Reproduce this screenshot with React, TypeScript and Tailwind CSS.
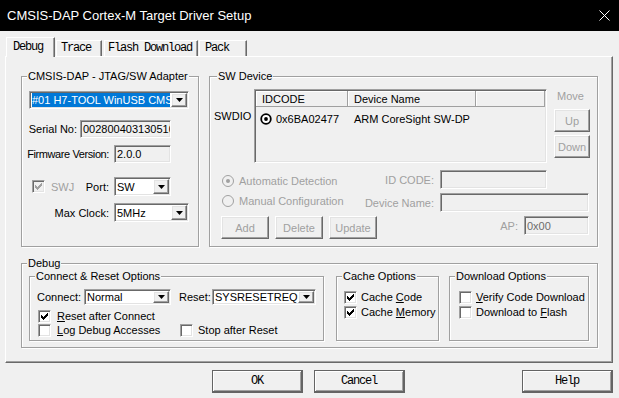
import React from "react";

const sunken =
  "border border-t-[#a0a0a0] border-l-[#a0a0a0] border-r-white border-b-white shadow-[inset_1px_1px_0_#696969,inset_-1px_-1px_0_#e3e3e3]";
const raised =
  "border border-t-white border-l-white border-r-[#696969] border-b-[#696969] shadow-[inset_-1px_-1px_0_#a0a0a0,inset_1px_1px_0_#e3e3e3]";

function Arrow() {
  return (
    <div className={`w-[16px] shrink-0 flex items-center justify-center bg-[#f0f0f0] ${raised}`}>
      <svg width="7" height="4" viewBox="0 0 7 4">
        <path d="M0 0H7L3.5 4Z" fill="#000" />
      </svg>
    </div>
  );
}

function Combo({ className, text, highlight }: { className: string; text: string; highlight?: boolean }) {
  return (
    <div className={`flex shrink-0 p-[1px] bg-white ${sunken} ${className}`}>
      <div className="flex-1 min-w-0 flex items-center overflow-hidden whitespace-nowrap pl-[1px] pr-[1px]">
        {highlight ? (
          <div className="flex-1 min-w-0 h-full flex items-center overflow-hidden bg-[#0078d7] text-white">{text}</div>
        ) : (
          <span>{text}</span>
        )}
      </div>
      <Arrow />
    </div>
  );
}

function Field({ className, children }: { className: string; children?: React.ReactNode }) {
  return (
    <div className={`flex shrink-0 items-center overflow-hidden whitespace-nowrap p-[1px] pl-[2px] bg-[#f0f0f0] ${sunken} ${className}`}>
      {children}
    </div>
  );
}

function Label({ className, children }: { className: string; children: React.ReactNode }) {
  return <div className={`shrink-0 flex justify-end whitespace-nowrap ${className}`}>{children}</div>;
}

function Check({ checked, disabled }: { checked?: boolean; disabled?: boolean }) {
  const c = disabled ? "#a0a0a0" : "#000";
  const cols = [2, 3, 4, 3, 2, 1, 0];
  return (
    <div className={`w-[13px] h-[13px] shrink-0 flex items-center justify-center ${sunken} ${disabled ? "bg-[#f0f0f0]" : "bg-white"}`}>
      {checked && (
        <svg width="7" height="7" viewBox="0 0 7 7" shapeRendering="crispEdges">
          {cols.map((y, x) => (
            <rect key={x} x={x} y={y} width="1" height="3" fill={c} />
          ))}
        </svg>
      )}
    </div>
  );
}

function Radio({ checked }: { checked?: boolean }) {
  return (
    <svg width="12" height="12" viewBox="0 0 12 12" className="shrink-0">
      <circle cx="6" cy="6" r="5.5" fill="#f0f0f0" stroke="#a0a0a0" />
      {checked && <circle cx="6" cy="6" r="2" fill="#a0a0a0" />}
    </svg>
  );
}

function Btn({ className, children, disabled }: { className: string; children: React.ReactNode; disabled?: boolean }) {
  return (
    <div className={`flex shrink-0 items-center justify-center bg-[#f0f0f0] ${raised} ${disabled ? "text-[#a0a0a0]" : ""} ${className}`}>
      {children}
    </div>
  );
}

function Group({ label, className, children, labelLeft }: { label: string; className: string; children?: React.ReactNode; labelLeft?: string }) {
  return (
    <div className={`relative shrink-0 border border-[#a0a0a0] shadow-[inset_1px_1px_0_#fff,1px_1px_0_#fff] ${className}`}>
      <span className={`absolute top-[-8px] px-[1px] bg-[#f0f0f0] leading-[14px] whitespace-nowrap ${labelLeft ?? "left-[5px]"}`}>{label}</span>
      {children}
    </div>
  );
}

const tabBase =
  "shrink-0 bg-[#f0f0f0] border-l border-t border-r border-white border-r-[#696969] shadow-[inset_-1px_0_0_#a0a0a0] leading-[14px] whitespace-nowrap";
const dlgBtn =
  "flex items-center justify-center w-[91px] h-[23px] bg-[#f0f0f0] border border-[#646464] border-r-2 border-b-2 shadow-[inset_1px_1px_0_#fff,inset_-1px_-1px_0_#a0a0a0]";

export default function App() {
  return (
    <div className="w-[619px] h-[398px] overflow-hidden bg-[#f0f0f0] flex flex-col text-[11px] leading-[14px] text-black font-['Liberation_Sans',Arial,sans-serif]">
      {/* Title bar */}
      <div className="h-[31px] shrink-0 bg-black text-white flex items-center pl-[7px] pr-[9px] text-[13px]">
        <span className="flex-1">CMSIS-DAP Cortex-M Target Driver Setup</span>
        <svg width="11" height="11" viewBox="0 0 11 11">
          <path d="M0.5 0.5L10.5 10.5M10.5 0.5L0.5 10.5" stroke="#fff" strokeWidth="1" />
        </svg>
      </div>

      {/* Tabs */}
      <div className="relative z-10 h-[25px] shrink-0 flex items-end pl-[6px] font-['Liberation_Mono',monospace] text-[12px] tracking-[-1.2px]">
        <div className={`${tabBase} w-[49px] h-[20px] -mb-px pl-[6px] pt-[2px]`}>Debug</div>
        <div className={`${tabBase} ml-[1px] w-[46px] h-[16px] pl-[4px]`}>Trace</div>
        <div className={`${tabBase} ml-[2px] w-[94px] h-[16px] pl-[3px]`}>Flash Download</div>
        <div className={`${tabBase} ml-[1px] w-[48px] h-[16px] pl-[5px]`}>Pack</div>
      </div>

      {/* Tab panel */}
      <div className="ml-[5px] w-[608px] h-[307px] shrink-0 border border-t-white border-l-white border-r-[#696969] border-b-[#696969] shadow-[inset_-1px_-1px_0_#a0a0a0] flex flex-col">
        <div className="flex mt-[19px] ml-[15px]">
          {/* Adapter group */}
          <Group label="CMSIS-DAP - JTAG/SW Adapter" className="w-[178px] h-[171px] flex flex-col">
            <Combo className="mt-[14px] ml-[7px] w-[160px] h-[18px]" text="#01 H7-TOOL WinUSB CMSIS-DAP" highlight />
            <div className="mt-[11px] h-[18px] flex items-center">
              <Label className="w-[55px]">Serial No:</Label>
              <Field className="ml-[3px] w-[91px] h-[18px]">002800403130510</Field>
            </div>
            <div className="mt-[7px] h-[18px] flex items-center">
              <Label className="w-[87px] tracking-[-0.4px]">Firmware Version:</Label>
              <Field className="ml-[5px] w-[57px] h-[18px]">2.0.0</Field>
            </div>
            <div className="mt-[14px] h-[19px] flex items-center">
              <div className="w-[87px] shrink-0 flex items-center">
                <div className="ml-[10px]">
                  <Check checked disabled />
                </div>
                <span className="ml-[6px] text-[#a0a0a0]">SWJ</span>
                <span className="ml-auto">Port:</span>
              </div>
              <Combo className="ml-[5px] w-[57px] h-[19px]" text="SW" />
            </div>
            <div className="mt-[7px] h-[19px] flex items-center">
              <Label className="w-[87px]">Max Clock:</Label>
              <Combo className="ml-[5px] w-[75px] h-[19px]" text="5MHz" />
            </div>
          </Group>

          {/* SW Device group */}
          <Group label="SW Device" labelLeft="left-[7px]" className="ml-[10px] w-[389px] h-[171px] flex flex-col">
            <div className="mt-[12px] flex">
              <div className="w-[44px] pl-[4px] pt-[20px] shrink-0">SWDIO</div>
              <div className={`w-[293px] h-[74px] shrink-0 p-[1px] flex flex-col bg-[#f0f0f0] ${sunken}`}>
                <div className="h-[16px] flex shrink-0">
                  <div className="w-[92px] shrink-0 pl-[6px] flex items-center border-r border-b border-[#a0a0a0] shadow-[inset_1px_1px_0_#fff]">IDCODE</div>
                  <div className="w-[128px] shrink-0 pl-[6px] flex items-center border-r border-b border-[#a0a0a0] shadow-[inset_1px_1px_0_#fff]">Device Name</div>
                  <div className="flex-1 border-r border-b border-[#a0a0a0] shadow-[inset_1px_1px_0_#fff]" />
                </div>
                <div className="mt-[5px] h-[14px] flex items-center">
                  <div className="w-[92px] shrink-0 flex items-center pl-[4px]">
                    <svg width="12" height="12" viewBox="0 0 12 12" className="shrink-0">
                      <circle cx="6" cy="6" r="4.8" fill="#fff" stroke="#000" strokeWidth="1.8" />
                      <circle cx="6" cy="6" r="1.9" fill="#000" />
                    </svg>
                    <span className="ml-[4px]">0x6BA02477</span>
                  </div>
                  <span className="pl-[6px]">ARM CoreSight SW-DP</span>
                </div>
              </div>
              <div className="ml-[7px] w-[36px] shrink-0 flex flex-col">
                <span className="pl-[3px] text-[#a0a0a0]">Move</span>
                <Btn disabled className="mt-[6px] h-[23px]">Up</Btn>
                <Btn disabled className="mt-[3px] h-[23px]">Down</Btn>
              </div>
            </div>
            <div className="mt-[7px] flex">
              <div className="w-[170px] shrink-0 flex flex-col">
                <div className="mt-[1px] h-[20px] flex items-center pl-[12px]">
                  <Radio checked />
                  <span className="ml-[5px] text-[#a0a0a0]">Automatic Detection</span>
                </div>
                <div className="h-[20px] flex items-center pl-[12px]">
                  <Radio />
                  <span className="ml-[5px] text-[#a0a0a0]">Manual Configuration</span>
                </div>
                <div className="mt-[5px] flex pl-[11px]">
                  <Btn disabled className="w-[48px] h-[23px]">Add</Btn>
                  <Btn disabled className="ml-[6px] w-[48px] h-[23px]">Delete</Btn>
                  <Btn disabled className="ml-[6px] w-[48px] h-[23px]">Update</Btn>
                </div>
              </div>
              <div className="w-[209px] shrink-0 flex flex-col">
                <div className="h-[19px] flex items-center">
                  <Label className="w-[54px] text-[#a0a0a0]">ID CODE:</Label>
                  <Field className="ml-[6px] w-[107px] h-[19px]" />
                </div>
                <div className="mt-[4px] h-[19px] flex items-center">
                  <Label className="w-[54px] text-[#a0a0a0]">Device Name:</Label>
                  <Field className="ml-[6px] w-[149px] h-[19px]" />
                </div>
                <div className="mt-[4px] h-[19px] flex items-center justify-end">
                  <span className="text-[#a0a0a0]">AP:</span>
                  <Field className="ml-[6px] w-[65px] h-[19px]">
                    <span className="text-[#6d6d6d]">0x00</span>
                  </Field>
                </div>
              </div>
            </div>
          </Group>
        </div>

        {/* Debug group */}
        <Group label="Debug" className="mt-[16px] ml-[15px] w-[577px] h-[85px]">
          <div className="flex mt-[12px] ml-[7px]">
            <Group label="Connect & Reset Options" className="w-[295px] h-[65px] flex flex-col">
              <div className="mt-[12px] h-[16px] flex items-center">
                <span className="w-[54px] shrink-0 pl-[7px]">Connect:</span>
                <Combo className="w-[87px] h-[16px]" text="Normal" />
                <span className="w-[41px] shrink-0 pl-[8px]">Reset:</span>
                <Combo className="w-[104px] h-[16px]" text="SYSRESETREQ" />
              </div>
              <div className="mt-[4px] h-[14px] flex items-center pl-[8px]">
                <Check checked />
                <span className="ml-[6px]">
                  <u>R</u>eset after Connect
                </span>
              </div>
              <div className="h-[14px] flex items-center pl-[8px]">
                <div className="w-[142px] shrink-0 flex items-center">
                  <Check />
                  <span className="ml-[6px]">
                    <u>L</u>og Debug Accesses
                  </span>
                </div>
                <Check />
                <span className="ml-[5px]">Stop after Reset</span>
              </div>
            </Group>
            <Group label="Cache Options" className="ml-[12px] w-[103px] h-[65px] flex flex-col">
              <div className="mt-[13px] h-[14px] flex items-center pl-[7px]">
                <Check checked />
                <span className="ml-[4px]">
                  Cache <u>C</u>ode
                </span>
              </div>
              <div className="mt-[1px] h-[14px] flex items-center pl-[7px]">
                <Check checked />
                <span className="ml-[4px]">
                  Cache <u>M</u>emory
                </span>
              </div>
            </Group>
            <Group label="Download Options" className="ml-[10px] w-[140px] h-[65px] flex flex-col">
              <div className="mt-[13px] h-[14px] flex items-center pl-[9px]">
                <Check />
                <span className="ml-[4px]">
                  <u>V</u>erify Code Download
                </span>
              </div>
              <div className="mt-[1px] h-[14px] flex items-center pl-[9px]">
                <Check />
                <span className="ml-[4px]">
                  Download to <u>F</u>lash
                </span>
              </div>
            </Group>
          </div>
        </Group>
      </div>

      {/* Dialog buttons */}
      <div className="flex mt-[7px] font-['Liberation_Mono',monospace] text-[12px] tracking-[-1.2px]">
        <div className={`${dlgBtn} ml-[212px]`}>OK</div>
        <div className={`${dlgBtn} ml-[11px]`}>Cancel</div>
        <div className={`${dlgBtn} ml-[117px]`}>Help</div>
      </div>
    </div>
  );
}
